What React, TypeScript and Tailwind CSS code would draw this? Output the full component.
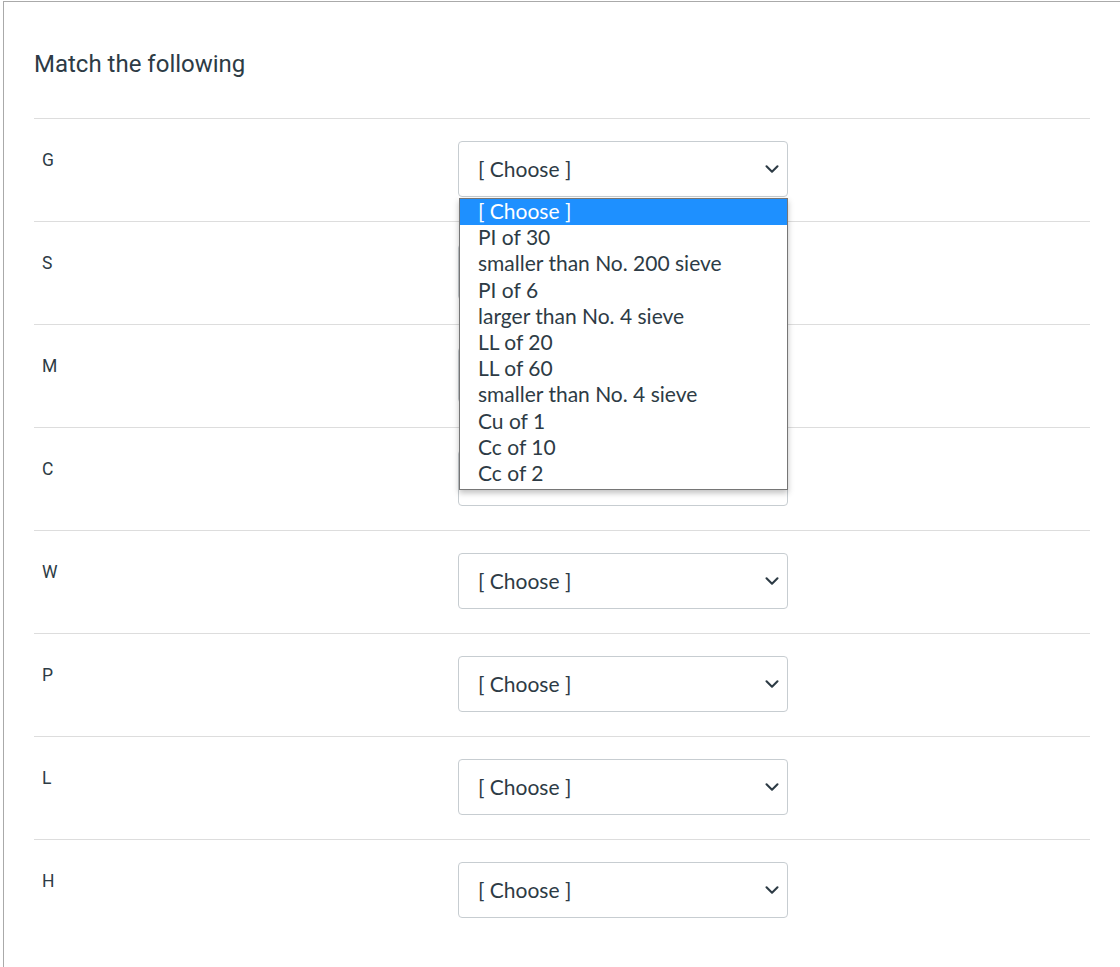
import { ChevronDown } from "lucide-react";

const rows = ["G", "S", "M", "C", "W", "P", "L", "H"];

const options = [
  "[ Choose ]",
  "PI of 30",
  "smaller than No. 200 sieve",
  "PI of 6",
  "larger than No. 4 sieve",
  "LL of 20",
  "LL of 60",
  "smaller than No. 4 sieve",
  "Cu of 1",
  "Cc of 10",
  "Cc of 2",
];

const Select = ({ open }: { open?: boolean }) => (
  <div className="relative w-[330px]">
    <div className="flex h-[56px] items-center justify-between rounded-[4px] border border-[#c7cdd1] bg-white pl-[19px] pr-[4px] text-[21px] text-[#2d3b45] [font-family:Lato,sans-serif]">
      <span>[ Choose ]</span>
      <ChevronDown className="h-[22px] w-[22px] text-[#2d3b45]" strokeWidth={2.3} />
    </div>
    {open && (
      <ul className="absolute left-[1px] top-[57px] z-10 w-[329px] border border-[#767676] bg-white pb-[2px] text-[21px] leading-[24px] text-[#2d3b45] shadow-[0_3px_6px_rgba(0,0,0,0.25)] [font-family:Lato,sans-serif]">
        {options.map((o, i) => (
          <li
            key={o}
            className={`h-[26.2px] pl-[18px] ${i === 0 ? "bg-[#1e90ff] text-white" : ""}`}
          >
            {o}
          </li>
        ))}
      </ul>
    )}
  </div>
);

export default function App() {
  return (
    <div className="min-h-screen bg-white">
      <div className="ml-[3px] mt-[1px] min-h-[966px] border-l border-t border-[#aaaaaa] pl-[30px] pr-[30px] [font-family:Roboto,sans-serif]">
        <h1 className="pt-[47px] text-[24px] leading-[30px] text-[#2d3b45]">Match the following</h1>
        <div className="mt-[39px]">
          {rows.map((r, i) => (
            <div key={r} className="flex border-t border-[#dddddd] pb-[24px] pt-[22px]">
              <div className="w-[424px] pl-[8px] pt-[7px] text-[17.5px] leading-[24px] text-[#2d3b45]">{r}</div>
              <Select open={i === 0} />
            </div>
          ))}
        </div>
      </div>
    </div>
  );
}
